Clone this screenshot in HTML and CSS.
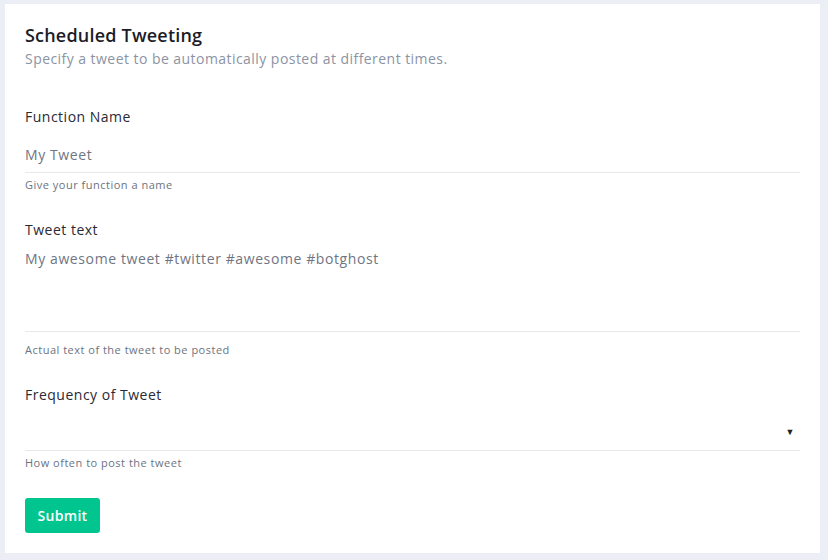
FILE: index.html
```html
<!DOCTYPE html>
<html lang="en">
<head>
<meta charset="utf-8">
<title>Scheduled Tweeting</title>
<link rel="stylesheet" href="styles.css">
</head>
<body>
<main class="card">
  <header class="card-head">
    <h1 class="title">Scheduled Tweeting</h1>
    <p class="subtitle">Specify a tweet to be automatically posted at different times.</p>
  </header>
  <form class="form">
    <div class="field">
      <label class="label">Function Name</label>
      <div class="input">My Tweet</div>
      <div class="help">Give your function a name</div>
    </div>
    <div class="field">
      <label class="label">Tweet text</label>
      <div class="input textarea">My awesome tweet #twitter #awesome #botghost</div>
      <div class="help help-wide">Actual text of the tweet to be posted</div>
    </div>
    <div class="field">
      <label class="label">Frequency of Tweet</label>
      <div class="input select"><span class="arrow">&#9660;</span></div>
      <div class="help">How often to post the tweet</div>
    </div>
    <div class="actions">
      <button type="button" class="btn">Submit</button>
    </div>
  </form>
</main>
</body>
</html>
```
FILE: styles.css
```css
html, body {
  margin: 0;
  padding: 0;
}
body {
  background: #ebeef4;
  padding: 4px 8px 7px 5px;
  font-family: "Open Sans", "Noto Sans", sans-serif;
  box-sizing: border-box;
  height: 560px;
}
.card {
  background: #ffffff;
  height: 549px;
  box-sizing: border-box;
  padding: 20px 20px 0 20px;
}
.title {
  margin: 0;
  font-size: 18px;
  font-weight: 600;
  color: #1c1c28;
  line-height: 22px;
  letter-spacing: 0.2px;
}
.subtitle {
  margin: 2px 0 0;
  font-size: 14px;
  color: #8c93a3;
  line-height: 22px;
  letter-spacing: 0.45px;
}
.form {
  margin-top: 37px;
  display: flex;
  flex-direction: column;
  gap: 27px;
}
.field {
  display: flex;
  flex-direction: column;
}
.label {
  font-size: 14px;
  color: #2a2a35;
  line-height: 20px;
  letter-spacing: 0.5px;
}
.input {
  margin-top: 18px;
  font-size: 14px;
  color: #6f7582;
  line-height: 20px;
  padding-bottom: 7px;
  border-bottom: 1px solid #e6e8eb;
  letter-spacing: 0.6px;
}
.textarea {
  margin-top: 9px;
  height: 75px;
}
.select {
  margin-top: 17px;
  display: flex;
  justify-content: flex-end;
  align-items: center;
  height: 20px;
  padding-bottom: 8px;
}
.arrow {
  font-size: 9px;
  color: #222;
  margin-right: 5px;
}
.help {
  margin-top: 4px;
  font-size: 11px;
  color: #6c7380;
  line-height: 16px;
  letter-spacing: 0.5px;
}
.help-wide {
  margin-top: 10px;
}
.actions {
  display: flex;
}
.btn {
  background: #00c58e;
  color: #ffffff;
  border: none;
  border-radius: 3px;
  width: 75px;
  height: 35px;
  font-family: inherit;
  font-size: 14px;
  font-weight: 600;
  letter-spacing: 0.3px;
  padding: 0;
}
```
